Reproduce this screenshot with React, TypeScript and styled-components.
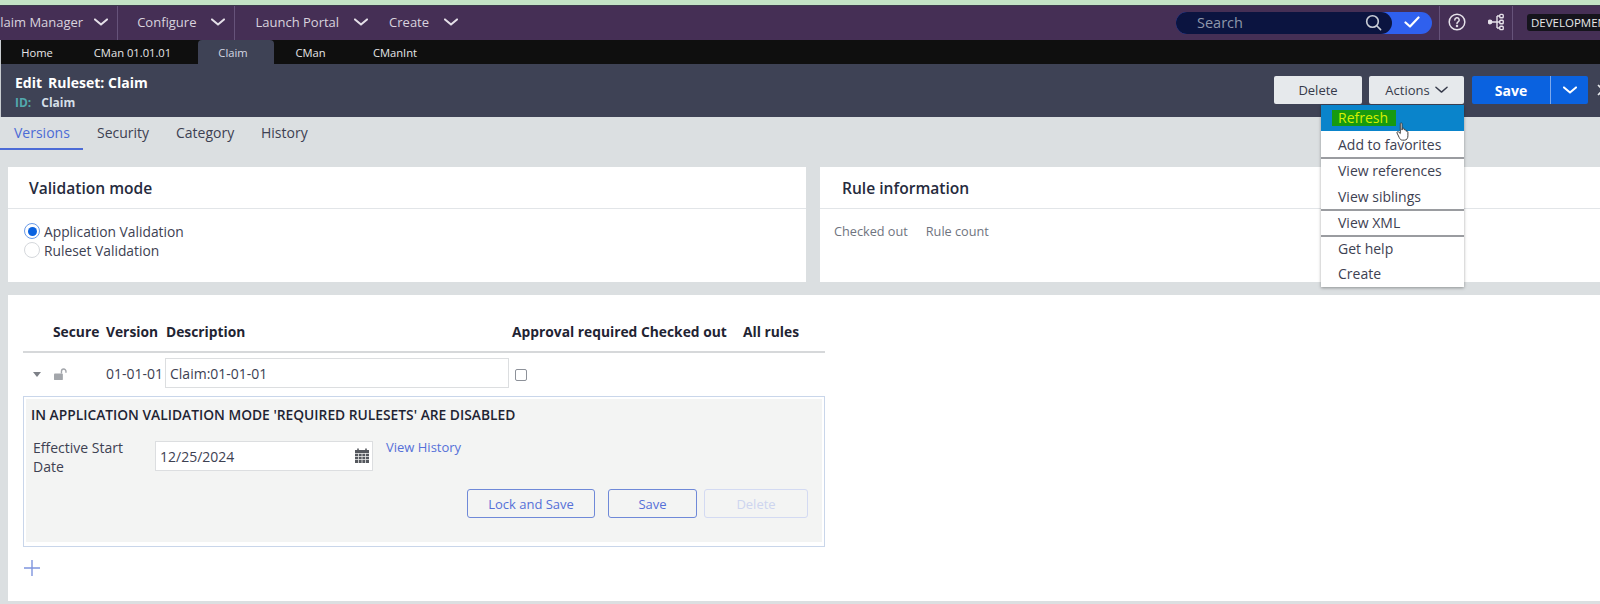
import styled, { createGlobalStyle } from 'styled-components'

const GlobalStyle = createGlobalStyle`
  html, body { margin: 0; padding: 0; height: 100%; }
  body { background: #dbdfe1; font-family: "Open Sans", "Liberation Sans", sans-serif; overflow: hidden; }
  * { box-sizing: border-box; }
`

const Page = styled.div`
  position: relative;
  width: 1600px;
  height: 604px;
  overflow: hidden;
  display: flex;
  flex-direction: column;
  background: #dbdfe1;
`

const TopStrip = styled.div`
  height: 5px;
  background: #c3e2c5;
  flex: none;
`

const NavBar = styled.div`
  height: 35px;
  flex: none;
  display: flex;
  align-items: center;
  background: #452f55;
  color: #d9d3de;
  font-size: 13px;
  border-top: 1px solid #3c3a4c;
`

const NavLeft = styled.div`
  display: flex;
  align-items: stretch;
  height: 100%;
  margin-left: -8px;
`

const NavItem = styled.div<{ $pl: number; $pr: number; $gap?: number; $line?: boolean }>`
  display: flex;
  align-items: center;
  gap: ${p => p.$gap ?? 15}px;
  padding: 0 ${p => p.$pr}px 2px ${p => p.$pl}px;
  border-right: ${p => (p.$line ? '1px solid #66537a' : 'none')};
  white-space: nowrap;
`

const NavRight = styled.div`
  margin-left: auto;
  display: flex;
  align-items: center;
  height: 100%;
`

const SearchPill = styled.div`
  width: 256px;
  height: 22px;
  border-radius: 11px;
  background: #2f60ee;
  display: flex;
  margin: 0 7px 1px 0;
`

const SearchField = styled.div`
  width: 216px;
  height: 22px;
  border-radius: 11px;
  background: #0b1440;
  color: #8f97ab;
  display: flex;
  align-items: center;
  justify-content: space-between;
  padding: 0 10px 0 21px;
  font-size: 14.5px;
`

const SearchCheck = styled.div`
  flex: 1;
  display: flex;
  align-items: center;
  justify-content: center;
  padding-bottom: 2px;
`

const IconCell = styled.div<{ $w: number; $pl?: number; $line?: boolean }>`
  width: ${p => p.$w}px;
  height: 100%;
  padding: 0 0 2px ${p => p.$pl ?? 0}px;
  display: flex;
  align-items: center;
  justify-content: center;
  border-left: ${p => (p.$line ? '1px solid #66537a' : 'none')};
`

const EnvBadge = styled.div`
  margin: 0 0 2px 14px;
  width: 73px;
  height: 17px;
  overflow: hidden;
  background: #15141c;
  border-radius: 3px 0 0 3px;
  color: #e8e8ea;
  font-size: 11.5px;
  line-height: 17px;
  padding-left: 4px;
  white-space: nowrap;
`

const TabStrip = styled.div`
  height: 24px;
  flex: none;
  display: flex;
  align-items: flex-end;
  background: #0f0f0f;
  border-left: 1px solid #c8ccd0;
  color: #e6e6e8;
  font-size: 11.2px;
`

const DocTab = styled.div<{ $w: number; $pr?: number; $active?: boolean }>`
  width: ${p => p.$w}px;
  height: 24px;
  padding-right: ${p => p.$pr ?? 0}px;
  display: flex;
  align-items: center;
  justify-content: center;
  background: ${p => (p.$active ? '#3e4255' : 'transparent')};
  border-radius: ${p => (p.$active ? '4px 4px 0 0' : '0')};
  color: ${p => (p.$active ? '#d5d8e2' : '#e6e6e8')};
`

const RuleHeader = styled.div`
  height: 53px;
  flex: none;
  display: flex;
  align-items: flex-start;
  justify-content: space-between;
  background: #3e4255;
  border-left: 1px solid #c8ccd0;
  padding: 12px 0 0 14px;
`

const TitleLine = styled.div`
  display: flex;
  gap: 6px;
  color: #fff;
  font-size: 14px;
  font-weight: 700;
  line-height: 14px;
`

const IdLine = styled.div`
  display: flex;
  gap: 10px;
  margin-top: 6px;
  font-size: 12px;
  font-weight: 700;
  line-height: 14px;
  color: #d5dfe8;
`

const IdLabel = styled.span`
  color: #52a9ae;
`

const HeaderButtons = styled.div`
  display: flex;
  align-items: center;
`

const GreyButton = styled.div<{ $w: number; $mr: number }>`
  width: ${p => p.$w}px;
  height: 28px;
  margin-right: ${p => p.$mr}px;
  border-radius: 2px;
  background: #e6e9ec;
  color: #363a4a;
  font-size: 13px;
  display: flex;
  align-items: center;
  justify-content: center;
  gap: 5px;
`

const SaveGroup = styled.div`
  width: 116px;
  height: 28px;
  display: flex;
  border-radius: 2px;
  background: #0a62e0;
  color: #fff;
`

const SaveLabel = styled.div`
  width: 79px;
  border-right: 1px solid #7ea9ec;
  display: flex;
  align-items: center;
  justify-content: center;
  font-size: 14px;
  font-weight: 700;
`

const SaveCaret = styled.div`
  flex: 1;
  display: flex;
  align-items: center;
  justify-content: center;
`

const CloseIcon = styled.svg`
  flex: none;
  margin: 0 -9px 0 9px;
`

const SubTabs = styled.div`
  height: 33px;
  flex: none;
  display: flex;
  color: #3d4152;
  font-size: 14px;
`

const SubTab = styled.div<{ $w: number; $pl: number; $active?: boolean }>`
  width: ${p => p.$w}px;
  height: 33px;
  padding-left: ${p => p.$pl}px;
  line-height: 31px;
  color: ${p => (p.$active ? '#4c6bd6' : '#3d4152')};
  border-bottom: ${p => (p.$active ? '2px solid #4c6bd6' : 'none')};
`

const Body = styled.div`
  flex: 1;
  display: flex;
  flex-direction: column;
  padding: 17px 0 3px 8px;
  gap: 13px;
`

const CardRow = styled.div`
  display: flex;
  gap: 14px;
`

const Card = styled.div<{ $w?: number }>`
  background: #fff;
  height: 115px;
  ${p => (p.$w ? `width: ${p.$w}px;` : 'flex: 1;')}
`

const CardTitle = styled.div<{ $pl: number }>`
  height: 42px;
  border-bottom: 1px solid #e2e5e8;
  padding-left: ${p => p.$pl}px;
  font-size: 15.6px;
  font-weight: 600;
  line-height: 43px;
  color: #262b3d;
`

const RadioList = styled.div`
  padding: 14px 0 0 16px;
  display: flex;
  flex-direction: column;
  gap: 3px;
`

const RadioRow = styled.div`
  display: flex;
  align-items: center;
  gap: 4px;
  height: 16px;
  font-size: 13.8px;
  color: #3d4152;
`

const Radio = styled.span<{ $on?: boolean }>`
  width: 16px;
  height: 16px;
  border-radius: 50%;
  border: 1px solid ${p => (p.$on ? '#6b9be8' : '#d5d8dc')};
  background: #fff;
  display: flex;
  align-items: center;
  justify-content: center;
  &::after {
    content: '';
    width: 9px;
    height: 9px;
    border-radius: 50%;
    background: ${p => (p.$on ? '#0a62e0' : 'transparent')};
  }
`

const StatRow = styled.div`
  display: flex;
  gap: 18px;
  padding: 13px 0 0 14px;
  font-size: 12.7px;
  color: #6f7480;
`

const MainCard = styled.div`
  flex: 1;
  background: #fff;
  padding: 24px 0 0 15px;
`

const Table = styled.div`
  width: 802px;
`

const HeadRow = styled.div`
  display: grid;
  grid-template-columns: 30px 53px 60px 346px 129px 102px 1fr;
  height: 34px;
  border-bottom: 2px solid #d6d8da;
  font-size: 13.8px;
  font-weight: 700;
  color: #1f2433;
  line-height: 25px;
  white-space: nowrap;
`

const VersionRow = styled.div`
  display: grid;
  grid-template-columns: 21px 14px 38px 59px 344px 1fr;
  height: 43px;
  padding: 5px 0 0 10px;
  align-items: start;
  font-size: 14px;
  color: #3d4152;
`

const RowIcon = styled.div`
  height: 30px;
  padding-top: 3px;
  display: flex;
  align-items: center;
  svg { flex: none; }
`

const VersionText = styled.div`
  line-height: 31px;
  white-space: nowrap;
`

const TextField = styled.div`
  height: 30px;
  width: 100%;
  border: 1px solid #dcdee0;
  background: #fff;
  padding: 0 4px;
  font-size: 14px;
  color: #3d4152;
  display: flex;
  align-items: center;
  justify-content: space-between;
`

const CalendarIcon = styled.svg`
  flex: none;
  margin-right: -2px;
`

const Checkbox = styled.div`
  width: 12px;
  height: 12px;
  margin: 11px 0 0 6px;
  border: 1px solid #8d9199;
  border-radius: 2px;
`

const Expanded = styled.div`
  height: 151px;
  border: 1px solid #c9d6ea;
  padding: 2px 2px 4px;
  background: #fff;
`

const ExpandedInner = styled.div`
  height: 100%;
  background: #f3f4f3;
  padding: 4px 5px 0 5px;
`

const Notice = styled.div`
  font-size: 13.8px;
  font-weight: 600;
  line-height: 24px;
  color: #1f2433;
`

const DateRow = styled.div`
  display: grid;
  grid-template-columns: 109px 218px auto;
  column-gap: 13px;
  margin-top: 14px;
  padding-left: 2px;
`

const FieldLabel = styled.div`
  font-size: 14px;
  line-height: 19px;
  color: #3d4152;
  margin-top: -3px;
`

const LinkText = styled.div`
  font-size: 13px;
  line-height: 14px;
  color: #5570d8;
  margin-top: -1px;
`

const FormActions = styled.div`
  display: flex;
  justify-content: flex-end;
  gap: 13px;
  margin-top: 13px;
  padding-right: 9px;
`

const OutlineButton = styled.div<{ $w: number; $disabled?: boolean }>`
  width: ${p => p.$w}px;
  height: 29px;
  margin-left: ${p => (p.$disabled ? '-6px' : '0')};
  border: 1px solid ${p => (p.$disabled ? '#d3daf2' : '#6f89d8')};
  border-radius: 3px;
  font-size: 13px;
  color: ${p => (p.$disabled ? '#cdd5ef' : '#5570d8')};
  display: flex;
  align-items: center;
  justify-content: center;
`

const AddRow = styled.div`
  margin-top: 13px;
  padding-left: 1px;
  display: flex;
`

const Menu = styled.div`
  position: absolute;
  left: 1321px;
  top: 105px;
  width: 143px;
  background: #fff;
  box-shadow: 0 1px 3px rgba(0, 0, 0, 0.35);
  font-size: 14px;
  color: #3d4152;
`

const MenuGroup = styled.div<{ $line?: boolean }>`
  border-top: ${p => (p.$line ? '2px solid #9a9ca0' : 'none')};
`

const MenuItem = styled.div<{ $h: number; $lh?: number }>`
  height: ${p => p.$h}px;
  line-height: ${p => p.$lh ?? p.$h}px;
  padding-left: 17px;
`

const ActiveItem = styled.div`
  position: relative;
  height: 26px;
  padding-left: 11px;
  background: #0a84cb;
`

const Highlight = styled.span`
  display: block;
  position: relative;
  top: 5px;
  width: 64px;
  height: 16px;
  line-height: 15px;
  padding-left: 6px;
  background: #179a10;
  color: #d6f000;
`

const HandCursor = styled.svg`
  position: absolute;
  left: 75px;
  top: 17px;
`

const Chevron = ({ size = 14, color = '#e4dfe8', width = 2 }: { size?: number; color?: string; width?: number }) => (
  <svg width={size} height={size * 0.6} viewBox="0 0 14 8" fill="none">
    <path d="M1 1.2 7 6.4 13 1.2" stroke={color} strokeWidth={width} strokeLinecap="round" strokeLinejoin="round" />
  </svg>
)

const App = () => {
  return (
    <Page>
      <GlobalStyle />
      <TopStrip />
      <NavBar>
        <NavLeft>
          <NavItem $pl={0} $pr={9} $gap={11} $line>
            Claim Manager <Chevron />
          </NavItem>
          <NavItem $pl={19} $pr={9} $line>
            Configure <Chevron />
          </NavItem>
          <NavItem $pl={20} $pr={0}>
            Launch Portal <Chevron />
          </NavItem>
          <NavItem $pl={21} $pr={0}>
            Create <Chevron />
          </NavItem>
        </NavLeft>
        <NavRight>
          <SearchPill>
            <SearchField>
              Search
              <svg width="17" height="17" viewBox="0 0 17 17" fill="none" stroke="#c9cdd6" strokeWidth="1.6" strokeLinecap="round">
                <circle cx="7.5" cy="7.5" r="5.8" />
                <path d="M12 12l3.6 3.6" />
              </svg>
            </SearchField>
            <SearchCheck>
              <svg width="16" height="12" viewBox="0 0 16 12" fill="none" stroke="#fff" strokeWidth="2.2" strokeLinecap="round" strokeLinejoin="round">
                <path d="M1.5 6.5 6 10.5 14.5 1.5" />
              </svg>
            </SearchCheck>
          </SearchPill>
          <IconCell $w={35} $line>
            <svg width="18" height="18" viewBox="0 0 18 18" fill="none" stroke="#e6e2ea" strokeWidth="1.5" strokeLinecap="round">
              <circle cx="9" cy="9" r="7.8" />
              <path d="M6.8 7a2.2 2.2 0 1 1 3.3 1.9c-.8.5-1.1.9-1.1 1.7" />
              <circle cx="9" cy="13" r=".5" />
            </svg>
          </IconCell>
          <IconCell $w={38} $pl={5}>
            <svg width="16" height="18" viewBox="0 0 16 18" fill="none" stroke="#e6e2ea" strokeWidth="1.4">
              <circle cx="2" cy="9" r="1.7" fill="#e6e2ea" />
              <path d="M3.5 9H9M9 3v12M9 3h3M9 9h3M9 15h3" />
              <rect x="11.8" y="1.4" width="3.4" height="3.4" rx=".8" />
              <rect x="11.8" y="7.3" width="3.4" height="3.4" rx=".8" />
              <rect x="11.8" y="13.2" width="3.4" height="3.4" rx=".8" />
            </svg>
          </IconCell>
          <IconCell $w={1} $line />
          <EnvBadge>DEVELOPMENT</EnvBadge>
        </NavRight>
      </NavBar>
      <TabStrip>
        <DocTab $w={72}>Home</DocTab>
        <DocTab $w={125} $pr={6}>CMan 01.01.01</DocTab>
        <DocTab $w={76} $pr={6} $active>Claim</DocTab>
        <DocTab $w={73}>CMan</DocTab>
        <DocTab $w={96}>CManInt</DocTab>
      </TabStrip>
      <RuleHeader>
        <div>
          <TitleLine>
            <span>Edit</span>
            <span>Ruleset: Claim</span>
          </TitleLine>
          <IdLine>
            <IdLabel>ID:</IdLabel>
            <span>Claim</span>
          </IdLine>
        </div>
        <HeaderButtons>
          <GreyButton $w={88} $mr={7}>Delete</GreyButton>
          <GreyButton $w={95} $mr={8}>
            Actions <Chevron size={13} color="#363a4a" width={1.5} />
          </GreyButton>
          <SaveGroup>
            <SaveLabel>Save</SaveLabel>
            <SaveCaret>
              <Chevron size={14} color="#fff" />
            </SaveCaret>
          </SaveGroup>
          <CloseIcon width="12" height="12" viewBox="0 0 12 12" stroke="#e6e9ec" strokeWidth="1.6">
            <path d="M1 1l10 10M11 1 1 11" />
          </CloseIcon>
        </HeaderButtons>
      </RuleHeader>
      <SubTabs>
        <SubTab $w={83} $pl={14} $active>Versions</SubTab>
        <SubTab $w={93} $pl={14}>Security</SubTab>
        <SubTab $w={85} $pl={0}>Category</SubTab>
        <SubTab $w={60} $pl={0}>History</SubTab>
      </SubTabs>
      <Body>
        <CardRow>
          <Card $w={798}>
            <CardTitle $pl={21}>Validation mode</CardTitle>
            <RadioList>
              <RadioRow><Radio $on />Application Validation</RadioRow>
              <RadioRow><Radio />Ruleset Validation</RadioRow>
            </RadioList>
          </Card>
          <Card>
            <CardTitle $pl={22}>Rule information</CardTitle>
            <StatRow>
              <span>Checked out</span>
              <span>Rule count</span>
            </StatRow>
          </Card>
        </CardRow>
        <MainCard>
          <Table>
            <HeadRow>
              <span />
              <span>Secure</span>
              <span>Version</span>
              <span>Description</span>
              <span>Approval required</span>
              <span>Checked out</span>
              <span>All rules</span>
            </HeadRow>
            <VersionRow>
              <RowIcon>
                <svg width="8" height="5" viewBox="0 0 10 6"><path d="M0 0h10L5 6z" fill="#7d8087" /></svg>
              </RowIcon>
              <RowIcon>
                <svg width="14" height="13" viewBox="0 0 15 13">
                  <rect x="0" y="5.5" width="9.5" height="7" rx="1" fill="#a3a6ab" />
                  <path d="M8 5.5V3a2.4 2.4 0 0 1 4.8 0v1.5" fill="none" stroke="#a3a6ab" strokeWidth="1.5" />
                </svg>
              </RowIcon>
              <span />
              <VersionText>01-01-01</VersionText>
              <TextField>Claim:01-01-01</TextField>
              <Checkbox />
            </VersionRow>
            <Expanded>
              <ExpandedInner>
                <Notice>IN APPLICATION VALIDATION MODE 'REQUIRED RULESETS' ARE DISABLED</Notice>
                <DateRow>
                  <FieldLabel>Effective Start<br />Date</FieldLabel>
                  <TextField>
                    12/25/2024
                    <CalendarIcon width="16" height="16" viewBox="0 0 16 16">
                      <rect x="1" y="2" width="14" height="13" fill="#55585e" />
                      <path d="M4 .5v3M12 .5v3" stroke="#55585e" strokeWidth="1.6" />
                      <path d="M1 5.5h14M1 8.5h14M1 11.5h14M4.5 5v10M8 5v10M11.5 5v10" stroke="#e8e8e8" strokeWidth=".8" />
                    </CalendarIcon>
                  </TextField>
                  <LinkText>View History</LinkText>
                </DateRow>
                <FormActions>
                  <OutlineButton $w={128}>Lock and Save</OutlineButton>
                  <OutlineButton $w={89}>Save</OutlineButton>
                  <OutlineButton $w={104} $disabled>Delete</OutlineButton>
                </FormActions>
              </ExpandedInner>
            </Expanded>
            <AddRow>
              <svg width="16" height="16" viewBox="0 0 16 16" stroke="#7f95de" strokeWidth="1.4">
                <path d="M8 0v16M0 8h16" />
              </svg>
            </AddRow>
          </Table>
        </MainCard>
      </Body>
      <Menu>
        <ActiveItem>
          <Highlight>Refresh</Highlight>
          <HandCursor width="15" height="20" viewBox="0 0 14 18">
            <path
              d="M4 1.2c0-.9 1.6-.9 1.6 0v6l.3-1.6c.9-.5 1.6 0 1.6.5l.2.9c.8-.5 1.5-.1 1.6.5l.2.8c.8-.4 1.6 0 1.6.8v3.5c0 2-1 4-3 4H6c-1.6 0-2.4-1.2-3-2.4L1 10c-.5-1 .7-1.8 1.5-1L4 10.4z"
              fill="#fff"
              stroke="#3a3a3a"
              strokeWidth=".9"
            />
          </HandCursor>
        </ActiveItem>
        <MenuGroup>
          <MenuItem $h={26} $lh={28}>Add to favorites</MenuItem>
        </MenuGroup>
        <MenuGroup $line>
          <MenuItem $h={25} $lh={24}>View references</MenuItem>
          <MenuItem $h={25}>View siblings</MenuItem>
        </MenuGroup>
        <MenuGroup $line>
          <MenuItem $h={24}>View XML</MenuItem>
        </MenuGroup>
        <MenuGroup $line>
          <MenuItem $h={24}>Get help</MenuItem>
          <MenuItem $h={26}>Create</MenuItem>
        </MenuGroup>
      </Menu>
    </Page>
  )
}

export default App
